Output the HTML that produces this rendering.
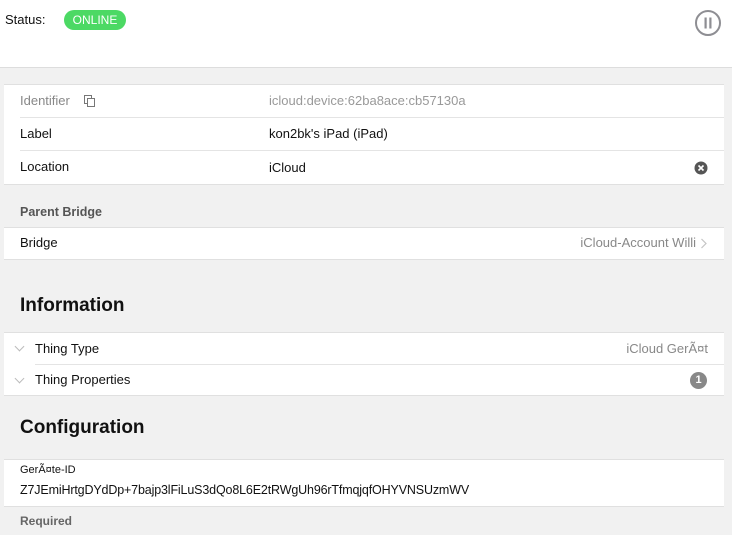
<!DOCTYPE html>
<html><head><meta charset="utf-8"><style>
*{margin:0;padding:0;box-sizing:border-box}
body{width:732px;height:535px;overflow:hidden;background:#f1f1f1;font-family:"Liberation Sans",sans-serif;color:#111;position:relative;font-size:13px}
.a{position:absolute}
.top{left:0;top:0;width:732px;height:68px;background:#fff;border-bottom:1px solid #ddd}
.box{position:absolute;left:4px;width:720px;background:#fff;border-top:1px solid #e0e0e0;border-bottom:1px solid #e0e0e0}
.row{position:relative;height:33px;line-height:32px}
.sep{position:absolute;left:16px;right:0;bottom:0;border-bottom:1px solid #e4e4e4}
.l{position:absolute;left:16px}
.v{position:absolute;left:265px}
h2{position:absolute;left:20px;font-size:19px;font-weight:bold;color:#111}
.chev{position:absolute;left:12px;top:10px;width:7px;height:7px;border-right:1px solid #bbb;border-bottom:1px solid #bbb;transform:rotate(45deg)}
</style></head><body>
<div class="a top"></div>
<div class="a" style="left:5px;top:12px;font-size:13px">Status:</div>
<div class="a" style="left:64px;top:10px;width:62px;height:20px;border-radius:10px;background:#4cd964;color:#fff;font-size:12px;line-height:20px;text-align:center">ONLINE</div>
<svg class="a" style="left:694px;top:9px" width="28" height="28"><circle cx="14" cy="14" r="12" fill="none" stroke="#8e8e93" stroke-width="2"/><rect x="10.5" y="8.5" width="2.2" height="11" fill="#8e8e93"/><rect x="15.3" y="8.5" width="2.2" height="11" fill="#8e8e93"/></svg>

<div class="box" style="top:84px">
<div class="row"><span class="l" style="color:#888">Identifier</span>
<svg class="a" style="left:80px;top:10px" width="11" height="12"><rect x="0.5" y="0.5" width="7" height="8" fill="none" stroke="#777"/><rect x="3.5" y="3.5" width="7" height="8" fill="#fff" stroke="#777"/></svg>
<span class="v" style="color:#999">icloud:device:62ba8ace:cb57130a</span><div class="sep"></div></div>
<div class="row"><span class="l">Label</span><span class="v">kon2bk's iPad (iPad)</span><div class="sep"></div></div>
<div class="row"><span class="l">Location</span><span class="v" style="top:1px">iCloud</span>
<svg class="a" style="left:690px;top:10px" width="14" height="14"><circle cx="7" cy="7" r="6.5" fill="#555"/><path d="M4.5 4.5L9.5 9.5M9.5 4.5L4.5 9.5" stroke="#fff" stroke-width="1.6"/></svg></div>
</div>

<div class="a" style="left:20px;top:205px;color:#555;font-weight:bold;font-size:12.5px">Parent Bridge</div>
<div class="box" style="top:227px"><div class="row" style="height:31px;line-height:30px"><span class="l">Bridge</span><span class="a" style="right:28px;color:#888">iCloud-Account Willi</span>
<svg class="a" style="left:696px;top:10px" width="8" height="11"><path d="M1.5 1L6 5.5L1.5 10" fill="none" stroke="#c4c4c4" stroke-width="1.2"/></svg></div></div>

<h2 style="top:295px">Information</h2>
<div class="box" style="top:332px">
<div class="row" style="height:32px;line-height:31px"><div class="chev"></div><span class="a" style="left:31px">Thing Type</span><span class="a" style="right:16px;color:#888">iCloud GerÃ¤t</span><div class="sep" style="left:31px"></div></div>
<div class="row" style="height:30px;line-height:30px"><div class="chev"></div><span class="a" style="left:31px">Thing Properties</span>
<div class="a" style="left:686px;top:7px;width:17px;height:17px;border-radius:50%;background:#888;color:#fff;font-size:11px;font-weight:bold;line-height:17px;text-align:center">1</div></div>
</div>

<h2 style="top:417px">Configuration</h2>
<div class="box" style="top:459px;height:48px">
<div class="a" style="left:16px;top:4px;font-size:11px">GerÃ¤te-ID</div>
<div class="a" style="left:16px;top:23px;font-size:12.5px;letter-spacing:-0.15px">Z7JEmiHrtgDYdDp+7bajp3lFiLuS3dQo8L6E2tRWgUh96rTfmqjqfOHYVNSUzmWV</div>
</div>
<div class="a" style="left:20px;top:514px;color:#666;font-weight:bold;font-size:12px">Required</div>
</body></html>
